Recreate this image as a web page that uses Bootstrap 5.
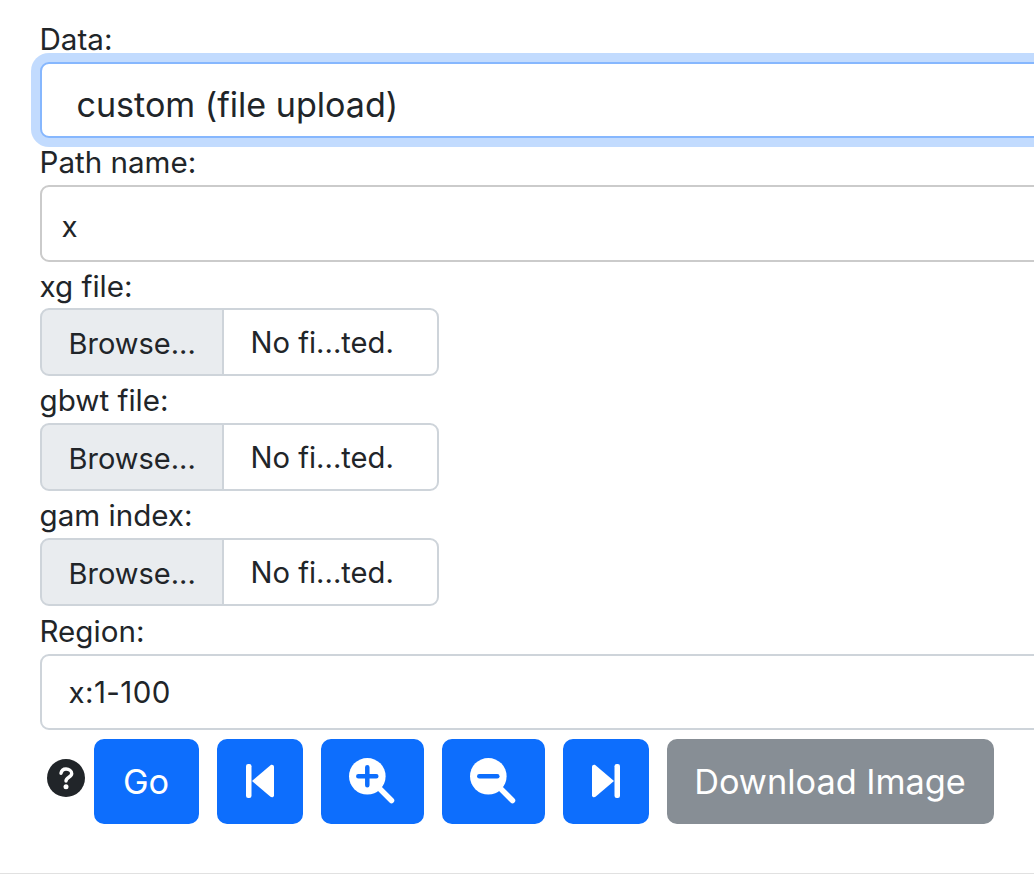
<!DOCTYPE html>
<html lang="en"><head><meta charset="utf-8"><title>Viewer</title>
<link rel="stylesheet" href="https://cdn.jsdelivr.net/npm/bootstrap@5.3.0/dist/css/bootstrap.min.css">
<style>
html{font-size:28.48px;height:100%}
:root{--bs-border-width:2px;--bs-border-color:#ced4da;--bs-body-font-family:Inter,"Liberation Sans",sans-serif;--bs-body-color:#212529}
body{font-family:Inter,"Liberation Sans",sans-serif;overflow:hidden;height:874px;width:1034px;position:relative}
.page-wrap{padding:16px 0 0 39.5px;width:1200px;height:873px}
.field-label{display:block;line-height:48px;height:46.7px;margin:0;font-size:29.6px}
.field-label.first{height:46px;line-height:47px}
.field-label.tall{height:48px;line-height:50px}
.data-select{height:76px;border-radius:9px;font-size:34.1px;padding:9px 0 0 35px;border-color:#86b7fe;box-shadow:0 0 0 9px rgba(13,110,253,.25);background-image:none;line-height:1.5}
.data-select:focus{border-color:#86b7fe;box-shadow:0 0 0 9px rgba(13,110,253,.25)}
.path-input{height:77px;border-radius:9px;border-color:#cbcbcb;padding:5px 0 0 20px;font-size:29.5px}
.region-input{height:76px;border-radius:9px;padding:1px 0 0 27px;font-size:29.5px;letter-spacing:.4px}
.file-group{width:399px;height:68px;flex-wrap:nowrap}
.file-btn{width:184px;height:68px;padding:3px 0 0 27px;border-radius:9px 0 0 9px;font-size:29px;background:#e9ecef}
.file-name{height:68px;padding:1px 0 0 27px;border-radius:0 9px 9px 0;font-size:29.2px;line-height:64px;min-height:0}
.btn-row{margin-top:9px;gap:18px}
.help-mark{width:38px;height:38px;margin:0 -9px 7px 7px;flex:none}
.tool-btn{height:85px;border-radius:10px;font-size:34.3px;padding:1px 0 0;display:flex;align-items:center;justify-content:center;flex:none}
.icon-btn{padding:0}
.w-go{width:105px}.w-skip{width:86px}.w-zoom{width:103px}
.w-dl{width:327px;background:#878e95;border-color:#878e95;opacity:1}
.foot-line{position:absolute;left:0;right:0;top:873px;height:1px;background:#e1e1e1}
</style></head><body>
<div class="page-wrap">
<label class="field-label first" for="d">Data:</label>
<select id="d" class="form-select data-select"><option>custom (file upload)</option></select>
<label class="field-label" for="p">Path name:</label>
<input id="p" class="form-control path-input" value="x">
<label class="field-label">xg file:</label>
<div class="input-group file-group"><span class="input-group-text file-btn">Browse...</span><span class="form-control file-name">No fi...ted.</span></div>
<label class="field-label">gbwt file:</label>
<div class="input-group file-group"><span class="input-group-text file-btn">Browse...</span><span class="form-control file-name">No fi...ted.</span></div>
<label class="field-label">gam index:</label>
<div class="input-group file-group"><span class="input-group-text file-btn">Browse...</span><span class="form-control file-name">No fi...ted.</span></div>
<label class="field-label tall" for="r">Region:</label>
<input id="r" class="form-control region-input" value="x:1-100">
<div class="d-flex align-items-center btn-row">
<svg class="help-mark" viewBox="0 0 38 38"><circle cx="19" cy="19" r="19" fill="#212529"/><path d="M14 14.3C14.5 11.5 16.5 10 19 10c3 0 5.700 1.800 5.700 4.500 0 4-5.700 3.500-5.700 7.500" fill="none" stroke="#fff" stroke-width="3.400" stroke-linecap="round"/><circle cx="19" cy="27.700" r="2.500" fill="#fff"/></svg>
<button class="btn btn-primary tool-btn w-go" type="button">Go</button>
<button class="btn btn-primary tool-btn icon-btn w-skip" type="button" aria-label="Previous"><svg width="28" height="34" viewBox="0 0 28 34"><rect x="0" y="0" width="5.500" height="34" rx="2.200" fill="#fff"/><path d="M6 17 24.500 1.200C25.800.2 28 .8 28 2.800V31.200c0 2-2.200 2.600-3.500 1.600Z" fill="#fff"/></svg></button>
<button class="btn btn-primary tool-btn icon-btn w-zoom" type="button" aria-label="Zoom in"><svg width="46" height="46" viewBox="0 0 46 46"><line x1="30" y1="30" x2="42.500" y2="42.500" stroke="#fff" stroke-width="5.500" stroke-linecap="round"/><circle cx="18.300" cy="18.300" r="18.300" fill="#fff"/><path d="M9.300 18.300H27.300M18.300 9.300V27.300" stroke="#0d6efd" stroke-width="4.500" stroke-linecap="round"/></svg></button>
<button class="btn btn-primary tool-btn icon-btn w-zoom" type="button" aria-label="Zoom out"><svg width="46" height="46" viewBox="0 0 46 46"><line x1="30" y1="30" x2="42.500" y2="42.500" stroke="#fff" stroke-width="5.500" stroke-linecap="round"/><circle cx="18.300" cy="18.300" r="18.300" fill="#fff"/><path d="M9.300 18.300H27.300" stroke="#0d6efd" stroke-width="4.500" stroke-linecap="round"/></svg></button>
<button class="btn btn-primary tool-btn icon-btn w-skip" type="button" aria-label="Next"><svg width="28" height="34" viewBox="0 0 28 34"><rect x="22.500" y="0" width="5.500" height="34" rx="2.200" fill="#fff"/><path d="M22 17 3.500 1.200C2.200.2 0 .8 0 2.800V31.200c0 2 2.200 2.600 3.500 1.600Z" fill="#fff"/></svg></button>
<button class="btn btn-secondary tool-btn w-dl" type="button">Download Image</button>
</div>
</div>
<div class="foot-line"></div>
<script src="https://cdn.jsdelivr.net/npm/bootstrap@5.3.0/dist/js/bootstrap.bundle.min.js"></script>
</body></html>
